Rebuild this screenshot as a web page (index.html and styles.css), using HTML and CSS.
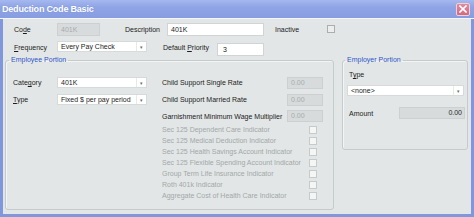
FILE: index.html
```html
<html>
<head>
<link rel="stylesheet" href="styles.css">
</head>
<body>
<div class="window">
  <div class="titlebar">
    <span class="title">Deduction Code Basic</span>
    <span class="close">
      <svg width="8" height="8" viewBox="0 0 8 8" fill="none" stroke="#fff" stroke-width="1.6" stroke-linecap="square"><line x1="1" y1="1" x2="7" y2="7"></line><line x1="7" y1="1" x2="1" y2="7"></line></svg>
    </span>
  </div>

  <div class="client">
    <div class="line line--first">
      <label class="lbl lbl--left">Co<u>d</u>e</label>
      <div class="field field--disabled field--code">401K</div>
      <label class="lbl lbl--desc">Description</label>
      <div class="field field--desc">401K</div>
      <label class="lbl lbl--inactive">Inactive</label>
      <span class="check check--active"></span>
    </div>

    <div class="line line--second">
      <label class="lbl lbl--left"><u>F</u>requency</label>
      <div class="select select--freq"><span class="select__value">Every Pay Check</span><span class="select__arrow">&#9662;</span></div>
      <label class="lbl lbl--priority">Default <u>P</u>riority</label>
      <div class="field field--priority">3</div>
    </div>

    <div class="groups">
      <fieldset class="group group--employee">
        <legend>Employee Portion</legend>
        <div class="emp">
          <div class="emp__left">
            <div class="row row--a">
              <label class="lbl lbl--cat">Cate<u>g</u>ory</label>
              <div class="select select--emp"><span class="select__value">401K</span><span class="select__arrow">&#9662;</span></div>
            </div>
            <div class="row row--a">
              <label class="lbl lbl--cat"><u>T</u>ype</label>
              <div class="select select--emp"><span class="select__value">Fixed $ per pay period</span><span class="select__arrow">&#9662;</span></div>
            </div>
          </div>
          <div class="emp__right">
            <div class="row row--a">
              <label class="lbl lbl--rate">Child Support Single Rate</label>
              <div class="field field--disabled field--rate">0.00</div>
            </div>
            <div class="row row--a">
              <label class="lbl lbl--rate">Child Support Married Rate</label>
              <div class="field field--disabled field--rate">0.00</div>
            </div>
            <div class="row row--b">
              <label class="lbl lbl--rate">Garnishment Minimum Wage Multiplier</label>
              <div class="field field--disabled field--rate">0.00</div>
            </div>
            <div class="row row--ind"><span class="lbl lbl--ind">Sec 125 Dependent Care Indicator</span><span class="check"></span></div>
            <div class="row row--ind"><span class="lbl lbl--ind">Sec 125 Medical Deduction Indicator</span><span class="check"></span></div>
            <div class="row row--ind"><span class="lbl lbl--ind">Sec 125 Health Savings Account Indicator</span><span class="check"></span></div>
            <div class="row row--ind"><span class="lbl lbl--ind">Sec 125 Flexible Spending Account Indicator</span><span class="check"></span></div>
            <div class="row row--ind"><span class="lbl lbl--ind">Group Term Life Insurance Indicator</span><span class="check"></span></div>
            <div class="row row--ind"><span class="lbl lbl--ind">Roth 401k Indicator</span><span class="check"></span></div>
            <div class="row row--ind"><span class="lbl lbl--ind">Aggregate Cost of Health Care Indicator</span><span class="check"></span></div>
          </div>
        </div>
      </fieldset>

      <fieldset class="group group--employer">
        <legend>Employer Portion</legend>
        <div class="er">
          <label class="lbl er__type">T<u>y</u>pe</label>
          <div class="select select--er"><span class="select__value">&lt;none&gt;</span><span class="select__arrow">&#9662;</span></div>
          <div class="er__amount">
            <label class="lbl lbl--amount">Amount</label>
            <div class="field field--disabled field--amount">0.00</div>
          </div>
        </div>
      </fieldset>
    </div>
  </div>
</div>
</body>
</html>
```

FILE: styles.css
```css
/* reset */
* {
  padding: 0;
  margin: 0;
  box-sizing: border-box;
}

body {
  background-color: #fff;
  font-family: "Liberation Sans", Arial, sans-serif;
  font-size: 7px;
  color: #1c1c1c;
}

u {
  text-decoration: underline;
}

.window {
  width: 474px;
  height: 217px;
  background-color: #e2e6e6;
  border: 3px solid #8197dc;
  border-top: 0;
  display: flex;
  flex-direction: column;
}

/* title bar */
.titlebar {
  height: 19px;
  margin: 0 -3px;
  padding: 0 4px 0 2px;
  display: flex;
  align-items: center;
  background: linear-gradient(#a6b8ef, #8ea4e5 40%, #879dE1);
  border-bottom: 1px solid #f4f6fb;
}

.title {
  font-size: 9px;
  font-weight: bold;
  color: #fff;
  letter-spacing: -0.2px;
  text-shadow: 0 0 1px #6f86cf;
}

.close {
  margin-left: auto;
  width: 14px;
  height: 13px;
  display: flex;
  align-items: center;
  justify-content: center;
  background: linear-gradient(#e28a9e, #cf6a82);
  border: 1px solid #f2d0d8;
  border-radius: 2px;
}

/* client area */
.client {
  flex: 1;
  padding-top: 3px;
}

.line {
  display: flex;
  align-items: center;
  padding-left: 11px;
}

.line--first {
  height: 14px;
}

.line--second {
  height: 17px;
  margin-top: 3px;
}

.lbl {
  white-space: nowrap;
}

.lbl--left {
  width: 43px;
}

.lbl--desc {
  margin-left: 25px;
  width: 42px;
}

.lbl--inactive {
  margin-left: 11px;
  width: 52px;
}

.lbl--priority {
  margin-left: 16px;
  width: 54px;
}

.field {
  height: 13px;
  background-color: #fff;
  border: 1px solid #d0d4d4;
  padding-left: 3px;
  line-height: 11px;
}

.field--disabled {
  background-color: #d7dbdb;
  border-color: #ccd0d0;
  color: #a7acac;
}

.field--code {
  width: 43px;
}

.field--desc {
  width: 97px;
}

.field--priority {
  width: 47px;
  margin-top: 4px;
  padding-left: 5px;
}

.check {
  width: 8px;
  height: 8px;
  background-color: #f4f5f5;
  border: 1px solid #c6caca;
}

.check--active {
  border-color: #a9aeae;
  background-color: #eceeee;
}

.select {
  height: 11px;
  background-color: #fff;
  border: 1px solid #d6dada;
  display: flex;
  align-items: center;
}

.select__value {
  padding-left: 3px;
  white-space: nowrap;
}

.select__arrow {
  margin-left: auto;
  width: 10px;
  height: 100%;
  border-left: 1px solid #e6e9e9;
  font-size: 5px;
  color: #6a6e6e;
  display: flex;
  align-items: center;
  justify-content: center;
}

.select--freq {
  width: 90px;
  margin-top: -2px;
}

/* group boxes */
.groups {
  display: flex;
  align-items: flex-start;
  padding-left: 2px;
}

.group {
  border: 1px solid #c5caca;
  border-radius: 3px;
  box-shadow: inset 1px 1px 0 #f3f5f5;
}

.group legend {
  color: #2d55c8;
  line-height: 8px;
  padding: 0 2px;
}

.group--employee {
  width: 329px;
  height: 154px;
  padding: 10px 0 0 7px;
}

.group--employee legend {
  margin-left: -4px;
}

.group--employer {
  width: 126px;
  height: 94px;
  margin-left: 8px;
  padding: 7px 0 0 5px;
}

.group--employer legend {
  margin-left: -3px;
}

.emp {
  display: flex;
}

.emp__left {
  width: 134px;
}

.emp__right {
  margin-left: 15px;
}

.row {
  display: flex;
  align-items: center;
}

.row--a {
  height: 17px;
}

.row--b {
  height: 16px;
}

.row--ind {
  height: 11px;
}

.lbl--cat {
  width: 44px;
}

.select--emp {
  width: 90px;
}

.lbl--rate {
  width: 125px;
}

.field--rate {
  width: 36px;
  height: 12px;
  line-height: 10px;
}

.lbl--ind {
  width: 147px;
  color: #a3a8a8;
}

/* employer */
.er__type {
  display: block;
  line-height: 8px;
  padding-left: 1px;
}

.select--er {
  width: 117px;
  margin: 6px 0 0 -1px;
}

.er__amount {
  display: flex;
  align-items: center;
  margin-top: 11px;
  padding-left: 1px;
}

.lbl--amount {
  width: 50px;
}

.field--amount {
  width: 66px;
  height: 12px;
  line-height: 10px;
  text-align: right;
  padding-right: 2px;
  color: #2a2a2a;
}
```
